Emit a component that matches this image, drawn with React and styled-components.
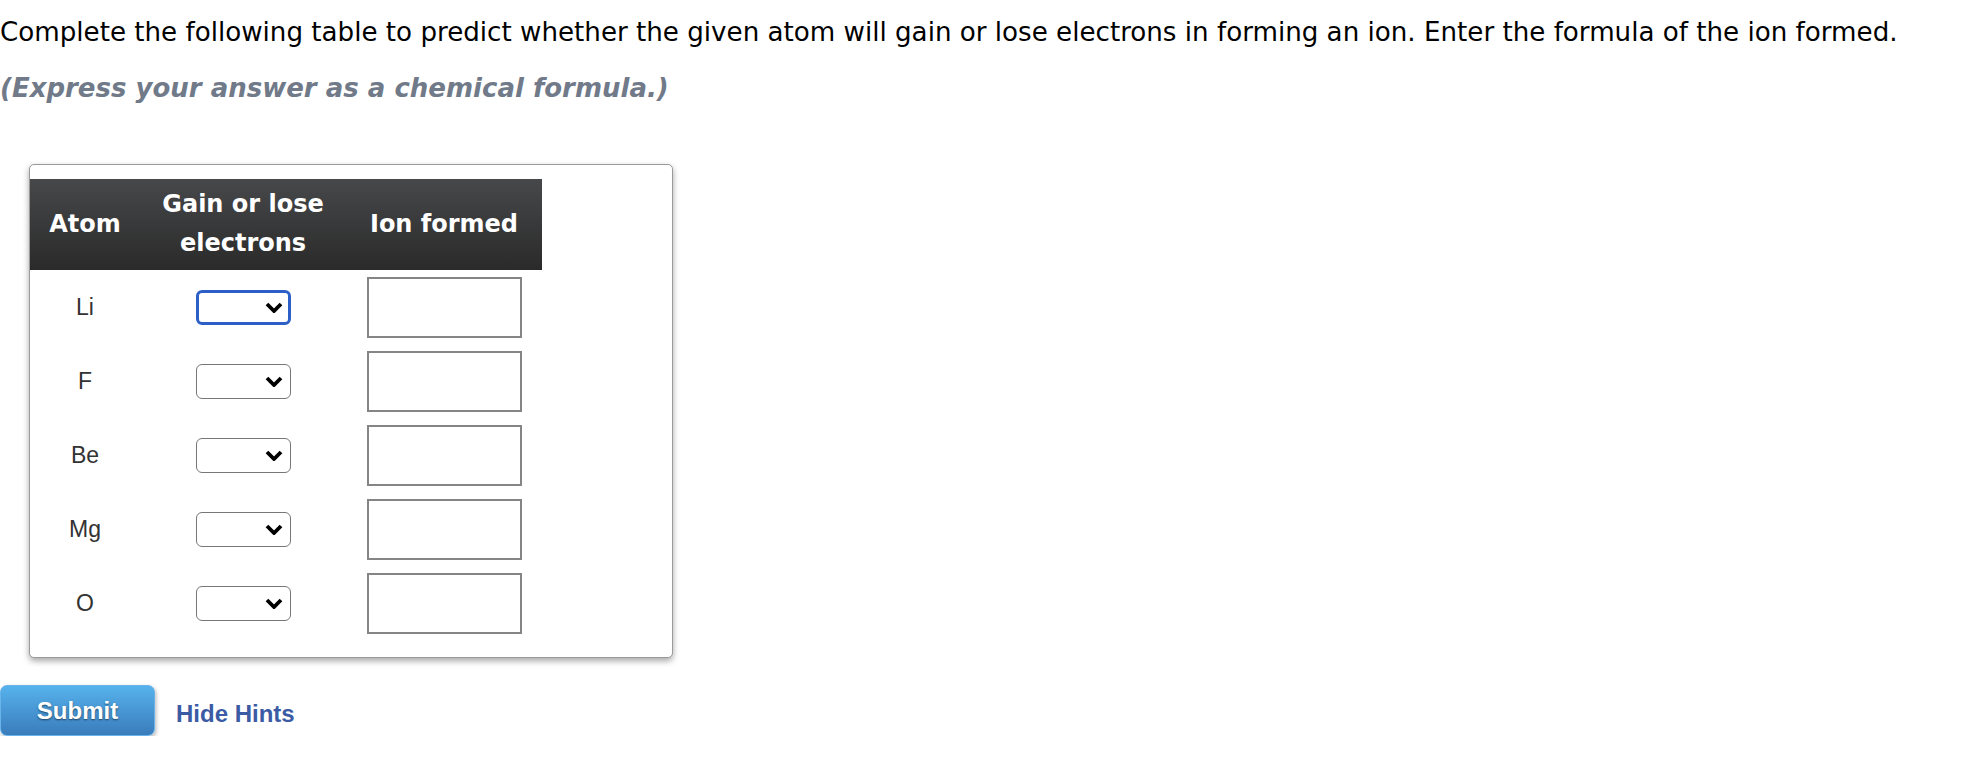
import React from 'react'
import styled, { createGlobalStyle } from 'styled-components'

const GlobalStyle = createGlobalStyle`
  html, body {
    margin: 0;
    padding: 0;
    background: #fff;
  }
  body {
    font-family: "DejaVu Sans", Verdana, sans-serif;
    color: #000;
  }
`

const Page = styled.div`
  padding-top: 17px;
`

const Prompt = styled.p`
  margin: 0;
  font-size: 26.15px;
  line-height: 30px;
  white-space: nowrap;
`

const Note = styled.p`
  margin: 26px 0 0 0;
  font-size: 26px;
  line-height: 30px;
  font-weight: bold;
  font-style: italic;
  color: #707a89;
`

const Card = styled.div`
  margin: 61px 0 0 29px;
  width: 642px;
  height: 478px;
  padding-top: 14px;
  border: 1px solid #9a9a9a;
  border-radius: 5px;
  box-shadow: 0 3px 6px rgba(0, 0, 0, 0.35);
  background: #fff;
`

const Table = styled.table`
  border-collapse: collapse;
  border-spacing: 0;
  table-layout: fixed;
`

const HeadRow = styled.tr`
  background: linear-gradient(#47484a, #2a2a2a);
`

const Th = styled.th`
  width: ${p => p.$w}px;
  padding: 6px 0 7px;
  font-family: "DejaVu Sans", Verdana, sans-serif;
  font-size: 24px;
  line-height: 39px;
  font-weight: bold;
  color: #fff;
  text-align: center;
  vertical-align: middle;
  white-space: nowrap;
`

const Td = styled.td`
  height: 61px;
  padding: 7px 0 6px;
  text-align: center;
  vertical-align: middle;
`

const AtomName = styled.span`
  font-family: "Liberation Sans", Arial, sans-serif;
  font-size: 23px;
  color: #333;
`

const SelectWrap = styled.div`
  position: relative;
  display: inline-block;
  width: 95px;
  height: 35px;
  vertical-align: middle;
`

const Select = styled.select`
  appearance: none;
  box-sizing: border-box;
  width: 100%;
  height: 100%;
  margin: 0;
  background: #fff;
  border: ${p => (p.$focused ? '3px solid #2d60c6' : '1.5px solid #777')};
  border-radius: 6px;
  outline: none;
  font-size: 18px;
`

const Chevron = styled.svg`
  position: absolute;
  right: 8px;
  top: 12px;
  width: 18px;
  height: 11px;
  pointer-events: none;
`

const IonInput = styled.input`
  box-sizing: border-box;
  width: 155px;
  height: 61px;
  margin: 0;
  border: 2px solid #858585;
  border-radius: 0;
  background: #fff;
  vertical-align: middle;
  font-size: 20px;
`

const Actions = styled.div`
  display: flex;
  align-items: center;
  gap: 21px;
  margin-top: 27px;
`

const SubmitButton = styled.button`
  box-sizing: border-box;
  width: 155px;
  height: 51px;
  padding: 0;
  border: 1px solid #69b4ea;
  border-radius: 7px;
  background: linear-gradient(#56b2ec, #3a7cbc);
  box-shadow: 1px 2px 4px rgba(0, 0, 0, 0.3);
  font-family: "Liberation Sans", Arial, sans-serif;
  font-size: 24px;
  font-weight: bold;
  color: #fff;
  text-shadow: 0 1px 2px rgba(0, 0, 0, 0.55);
  cursor: pointer;
`

const HintLink = styled.a`
  margin-top: 6px;
  font-family: "Liberation Sans", Arial, sans-serif;
  font-size: 24px;
  font-weight: bold;
  color: #3b5ba5;
  text-decoration: none;
  cursor: pointer;
`

const atoms = ['Li', 'F', 'Be', 'Mg', 'O']

const Dropdown = ({ focused }) => (
  <SelectWrap>
    <Select $focused={focused} defaultValue="">
      <option value=""></option>
      <option value="gain">gain</option>
      <option value="lose">lose</option>
    </Select>
    <Chevron viewBox="0 0 18 11">
      <path d="M2 2 L9 9 L16 2" fill="none" stroke="#000" strokeWidth="3.8" />
    </Chevron>
  </SelectWrap>
)

const App = () => {
  return (
    <>
      <GlobalStyle />
      <Page>
        <Prompt>
          Complete the following table to predict whether the given atom will gain or lose electrons in forming an ion. Enter the formula of the ion formed.
        </Prompt>
        <Note>(Express your answer as a chemical formula.)</Note>
        <Card>
          <Table>
            <thead>
              <HeadRow>
                <Th $w={110}>Atom</Th>
                <Th $w={206}>Gain or lose<br />electrons</Th>
                <Th $w={196}>Ion formed</Th>
              </HeadRow>
            </thead>
            <tbody>
              {atoms.map((atom, i) => (
                <tr key={atom}>
                  <Td><AtomName>{atom}</AtomName></Td>
                  <Td><Dropdown focused={i === 0} /></Td>
                  <Td><IonInput type="text" /></Td>
                </tr>
              ))}
            </tbody>
          </Table>
        </Card>
        <Actions>
          <SubmitButton>Submit</SubmitButton>
          <HintLink>Hide Hints</HintLink>
        </Actions>
      </Page>
    </>
  )
}

export default App
